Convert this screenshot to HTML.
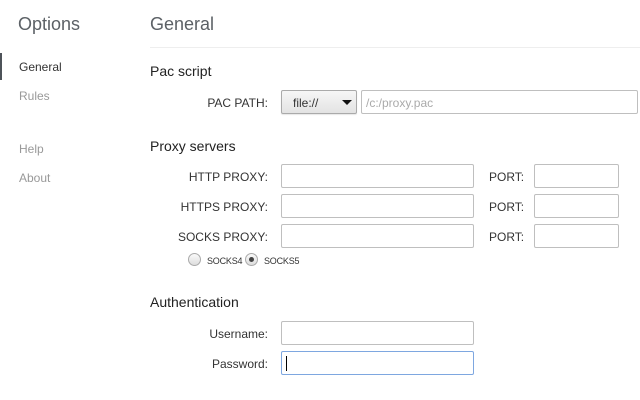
<!DOCTYPE html>
<html><head><style>
body{margin:0;width:640px;height:400px;background:#fff;font-family:"Liberation Sans",sans-serif;color:#303942;position:relative;overflow:hidden}
.a{position:absolute;white-space:nowrap}
.h1{font-size:18px;color:#5c6166}
.nav{font-size:12px;color:#999}
.sec{font-size:14px;color:#222}
.lbl{font-size:12px;color:#333;text-align:right;width:140px}
.in{position:absolute;border:1px solid #bfbfbf;border-radius:2px;background:#fff;box-sizing:border-box;height:24px}
.r{position:absolute;width:13px;height:13px;border-radius:50%;border:1px solid #aaa;box-sizing:border-box;background:linear-gradient(#fafafa,#ddd)}
</style></head><body>
<div class="a h1" style="left:18px;top:14px">Options</div>
<div class="a h1" style="left:150px;top:14px">General</div>
<div class="a" style="left:150px;top:47px;width:490px;height:1px;background:#eee"></div>
<div class="a" style="left:0;top:53px;width:2px;height:27px;background:#4e5359"></div>
<div class="a nav" style="left:19px;top:60px;color:#333">General</div>
<div class="a nav" style="left:19px;top:89px">Rules</div>
<div class="a nav" style="left:19px;top:142px">Help</div>
<div class="a nav" style="left:19px;top:171px">About</div>

<div class="a sec" style="left:150px;top:63px">Pac script</div>
<div class="a lbl" style="left:128px;top:96px">PAC PATH:</div>
<div class="in" style="left:281px;top:90px;width:76px;height:24px;background:linear-gradient(#f6f6f6,#e3e3e3);border-color:#aaa;box-shadow:0 1px 1px rgba(0,0,0,.1)"><span class="a" style="left:11px;top:5px;font-size:12px;color:#333">file://</span><span class="a" style="left:60px;top:9px;width:0;height:0;border-left:5px solid transparent;border-right:5px solid transparent;border-top:5px solid #111"></span></div>
<div class="in" style="left:361px;top:90px;width:277px"><span class="a" style="left:4px;top:5px;font-size:12px;color:#aaa">/c:/proxy.pac</span></div>

<div class="a sec" style="left:150px;top:138px">Proxy servers</div>
<div class="a lbl" style="left:128px;top:170px">HTTP PROXY:</div>
<div class="a lbl" style="left:128px;top:200px">HTTPS PROXY:</div>
<div class="a lbl" style="left:128px;top:230px">SOCKS PROXY:</div>
<div class="in" style="left:281px;top:164px;width:193px"></div>
<div class="in" style="left:281px;top:194px;width:193px"></div>
<div class="in" style="left:281px;top:224px;width:193px"></div>
<div class="a" style="left:489px;top:170px;font-size:12px;color:#333">PORT:</div>
<div class="a" style="left:489px;top:200px;font-size:12px;color:#333">PORT:</div>
<div class="a" style="left:489px;top:230px;font-size:12px;color:#333">PORT:</div>
<div class="in" style="left:534px;top:164px;width:85px"></div>
<div class="in" style="left:534px;top:194px;width:85px"></div>
<div class="in" style="left:534px;top:224px;width:85px"></div>
<div class="r" style="left:188px;top:253px"></div>
<div class="a" style="left:207px;top:256px;font-size:9px;letter-spacing:-0.2px;color:#333">SOCKS4</div>
<div class="r" style="left:245px;top:253px"><span class="a" style="left:3px;top:3px;width:5px;height:5px;border-radius:50%;background:#444"></span></div>
<div class="a" style="left:264px;top:256px;font-size:9px;letter-spacing:-0.2px;color:#333">SOCKS5</div>

<div class="a sec" style="left:150px;top:294px">Authentication</div>
<div class="a lbl" style="left:128px;top:327px">Username:</div>
<div class="a lbl" style="left:128px;top:357px">Password:</div>
<div class="in" style="left:281px;top:321px;width:193px"></div>
<div class="in" style="left:281px;top:351px;width:193px;border-color:#7ea7e0"><span class="a" style="left:4px;top:4px;width:1px;height:15px;background:#000"></span></div>
</body></html>
